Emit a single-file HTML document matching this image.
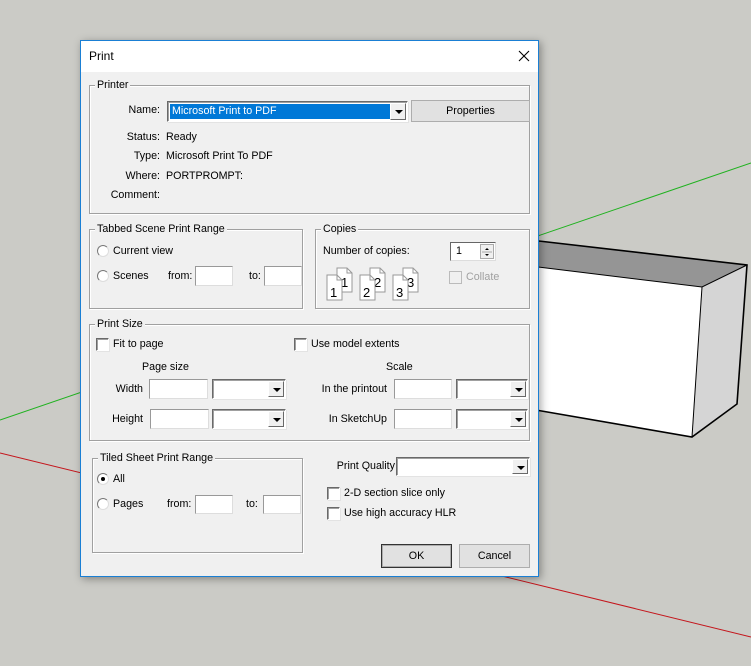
<!DOCTYPE html>
<html><head><meta charset="utf-8"><style>
*{box-sizing:border-box;margin:0;padding:0}
body{width:751px;height:666px;background:#cbcbc6;position:relative;overflow:hidden;font-family:"Liberation Sans",Tahoma,sans-serif;font-size:10.7px;color:#000}
.a{position:absolute;white-space:nowrap}
#dlg{position:absolute;left:80px;top:40px;width:459px;height:537px;background:#f0f0f0;border:1px solid #1a7fd4;box-shadow:2px 2px 8px rgba(0,0,0,.35)}
#title{position:absolute;left:0;top:0;width:457px;height:31px;background:#fff}
.g{position:absolute;border:1px solid #a0a0a0;box-shadow:inset 1px 1px 0 #fff,1px 1px 0 #fff}
.gl{position:absolute;top:-8px;left:5px;background:#f0f0f0;padding:0 2px;line-height:14px}
.r{text-align:right}
.in{position:absolute;background:#fff;border:1px solid #999;border-right-color:#ddd;border-bottom-color:#ddd}
.cb{position:absolute;background:#fff;border:1px solid;border-color:#696969 #fff #fff #696969;box-shadow:inset 1px 1px 0 #a0a0a0,1px 1px 0 #e3e3e3}
.arr{position:absolute;right:1px;top:1px;bottom:1px;width:16px;background:#f0f0f0;border:1px solid;border-color:#fff #696969 #696969 #fff}
.arr:after{content:"";position:absolute;left:4px;top:6px;border-left:4px solid transparent;border-right:4px solid transparent;border-top:4px solid #000}
.chk{position:absolute;width:13px;height:13px;background:#fff;border:1px solid;border-color:#696969 #fff #fff #696969;box-shadow:inset 1px 1px 0 #a0a0a0,1px 1px 0 #e3e3e3}
.rad{position:absolute;width:12px;height:12px;border-radius:50%;background:#fff;border:1px solid #888;border-color:#777 #ddd #ddd #777}
.btn{position:absolute;background:#e1e1e1;border:1px solid #adadad;text-align:center;line-height:20px}
</style></head><body>
<svg class="a" style="left:0;top:0" width="751" height="666">
<line x1="0" y1="420" x2="751" y2="163" stroke="#1fb21f" stroke-width="1"/>
<line x1="0" y1="453" x2="751" y2="637" stroke="#c4161c" stroke-width="1"/>
<polygon points="530,240 747,265 702,287 530,266" fill="#959595"/>
<polygon points="530,266 702,287 692,437 530,409" fill="#fff"/>
<polygon points="702,287 747,265 737,404 692,437" fill="#d5d5d5"/>
<polyline points="530,240 747,265 737,404 692,437 530,409" fill="none" stroke="#000" stroke-width="1.6"/>
<polyline points="530,266 702,287 747,265" fill="none" stroke="#000" stroke-width="1"/>
<line x1="702" y1="287" x2="692" y2="437" stroke="#000" stroke-width="1"/>
</svg>
<div id="dlg">
<div id="title"><span class="a" style="left:8px;top:8px;font-size:12px">Print</span>
<svg class="a" style="left:437px;top:9px" width="12" height="12"><path d="M1 1L11 11M11 1L1 11" stroke="#000" stroke-width="1.1"/></svg></div>

<div class="g" style="left:8px;top:44px;width:441px;height:129px"><span class="gl">Printer</span></div>
<span class="a r" style="left:20px;top:63px;width:59px">Name:</span>
<div class="cb" style="left:86px;top:60px;width:241px;height:21px"><div class="a" style="left:2px;top:2px;width:221px;height:15px;background:#0078d7;color:#fff;line-height:15px;padding-left:2px">Microsoft Print to PDF</div><div class="arr"></div></div>
<div class="btn" style="left:330px;top:59px;width:119px;height:22px">Properties</div>
<span class="a r" style="left:20px;top:90px;width:59px">Status:</span><span class="a" style="left:85px;top:90px">Ready</span>
<span class="a r" style="left:20px;top:109px;width:59px">Type:</span><span class="a" style="left:85px;top:109px">Microsoft Print To PDF</span>
<span class="a r" style="left:20px;top:129px;width:59px">Where:</span><span class="a" style="left:85px;top:129px">PORTPROMPT:</span>
<span class="a r" style="left:20px;top:148px;width:59px">Comment:</span>

<div class="g" style="left:8px;top:188px;width:214px;height:80px"><span class="gl">Tabbed Scene Print Range</span></div>
<div class="rad" style="left:16px;top:204px"></div><span class="a" style="left:32px;top:204px">Current view</span>
<div class="rad" style="left:16px;top:229px"></div><span class="a" style="left:32px;top:229px">Scenes</span>
<span class="a" style="left:87px;top:229px">from:</span><div class="in" style="left:114px;top:225px;width:38px;height:20px"></div>
<span class="a" style="left:168px;top:229px">to:</span><div class="in" style="left:183px;top:225px;width:38px;height:20px"></div>

<div class="g" style="left:234px;top:188px;width:215px;height:80px"><span class="gl">Copies</span></div>
<span class="a" style="left:242px;top:204px">Number of copies:</span>
<div class="in" style="left:369px;top:201px;width:46px;height:19px;border-color:#666 #ddd #ddd #666"><span class="a" style="left:5px;top:2px">1</span><div class="a" style="left:29px;top:1px;width:14px;height:15px;background:#f0f0f0;border:1px solid #aaa"></div><svg class="a" style="left:31px;top:2px" width="10" height="14"><path d="M3 5h4l-2-2zM3 9h4l-2 2z" fill="#000"/><line x1="0" y1="7" x2="10" y2="7" stroke="#aaa"/></svg></div>
<svg class="a" style="left:244px;top:225px" width="110" height="36">
<g font-family="Liberation Sans,sans-serif" font-size="13">
<path d="M12 2h10l5 5v19h-15z" fill="#fff" stroke="#999"/><path d="M22 2v5h5" fill="none" stroke="#999"/><text x="16" y="21">1</text>
<path d="M2 9h10l5 5v20h-15z" fill="#fff" stroke="#999"/><path d="M12 9v5h5" fill="none" stroke="#999"/><text x="5" y="31">1</text></g>
<g transform="translate(33,0)" font-family="Liberation Sans,sans-serif" font-size="13"><path d="M12 2h10l5 5v19h-15z" fill="#fff" stroke="#999"/><path d="M22 2v5h5" fill="none" stroke="#999"/><text x="16" y="21">2</text><path d="M2 9h10l5 5v20h-15z" fill="#fff" stroke="#999"/><path d="M12 9v5h5" fill="none" stroke="#999"/><text x="5" y="31">2</text></g>
<g transform="translate(66,0)" font-family="Liberation Sans,sans-serif" font-size="13"><path d="M12 2h10l5 5v19h-15z" fill="#fff" stroke="#999"/><path d="M22 2v5h5" fill="none" stroke="#999"/><text x="16" y="21">3</text><path d="M2 9h10l5 5v20h-15z" fill="#fff" stroke="#999"/><path d="M12 9v5h5" fill="none" stroke="#999"/><text x="5" y="31">3</text></g>
</svg>
<div class="chk" style="left:368px;top:230px;border-color:#bbb;background:#f0f0f0;box-shadow:none"></div><span class="a" style="left:385px;top:230px;color:#a0a0a0">Collate</span>

<div class="g" style="left:8px;top:283px;width:441px;height:117px"><span class="gl">Print Size</span></div>
<div class="chk" style="left:15px;top:297px"></div><span class="a" style="left:32px;top:297px">Fit to page</span>
<div class="chk" style="left:213px;top:297px"></div><span class="a" style="left:230px;top:297px">Use model extents</span>
<span class="a" style="left:61px;top:320px">Page size</span>
<span class="a" style="left:305px;top:320px">Scale</span>
<span class="a r" style="left:20px;top:342px;width:42px">Width</span>
<div class="in" style="left:68px;top:338px;width:59px;height:20px"></div>
<div class="cb" style="left:131px;top:338px;width:74px;height:20px"><div class="arr"></div></div>
<span class="a r" style="left:20px;top:372px;width:42px">Height</span>
<div class="in" style="left:69px;top:368px;width:59px;height:20px"></div>
<div class="cb" style="left:131px;top:368px;width:74px;height:20px"><div class="arr"></div></div>
<span class="a r" style="left:200px;top:342px;width:106px">In the printout</span>
<div class="in" style="left:313px;top:338px;width:58px;height:20px"></div>
<div class="cb" style="left:375px;top:338px;width:72px;height:20px"><div class="arr"></div></div>
<span class="a r" style="left:200px;top:372px;width:106px">In SketchUp</span>
<div class="in" style="left:313px;top:368px;width:58px;height:20px"></div>
<div class="cb" style="left:375px;top:368px;width:72px;height:20px"><div class="arr"></div></div>

<div class="g" style="left:11px;top:417px;width:211px;height:95px"><span class="gl">Tiled Sheet Print Range</span></div>
<div class="rad" style="left:16px;top:432px"></div><div class="a" style="left:20px;top:436px;width:4px;height:4px;background:#000;border-radius:50%"></div><span class="a" style="left:32px;top:432px">All</span>
<div class="rad" style="left:16px;top:457px"></div><span class="a" style="left:32px;top:457px">Pages</span>
<span class="a" style="left:86px;top:457px">from:</span><div class="in" style="left:114px;top:454px;width:38px;height:19px"></div>
<span class="a" style="left:165px;top:457px">to:</span><div class="in" style="left:182px;top:454px;width:38px;height:19px"></div>

<span class="a r" style="left:220px;top:419px;width:94px">Print Quality</span>
<div class="cb" style="left:315px;top:416px;width:134px;height:19px"><div class="arr"></div></div>
<div class="chk" style="left:246px;top:446px"></div><span class="a" style="left:263px;top:446px">2-D section slice only</span>
<div class="chk" style="left:246px;top:466px"></div><span class="a" style="left:263px;top:466px">Use high accuracy HLR</span>

<div class="btn" style="left:300px;top:503px;width:71px;height:24px;border:1px solid #333;line-height:22px;box-shadow:inset 0 0 0 1px #adadad">OK</div>
<div class="btn" style="left:378px;top:503px;width:71px;height:24px;line-height:22px">Cancel</div>
</div>
</body></html>
